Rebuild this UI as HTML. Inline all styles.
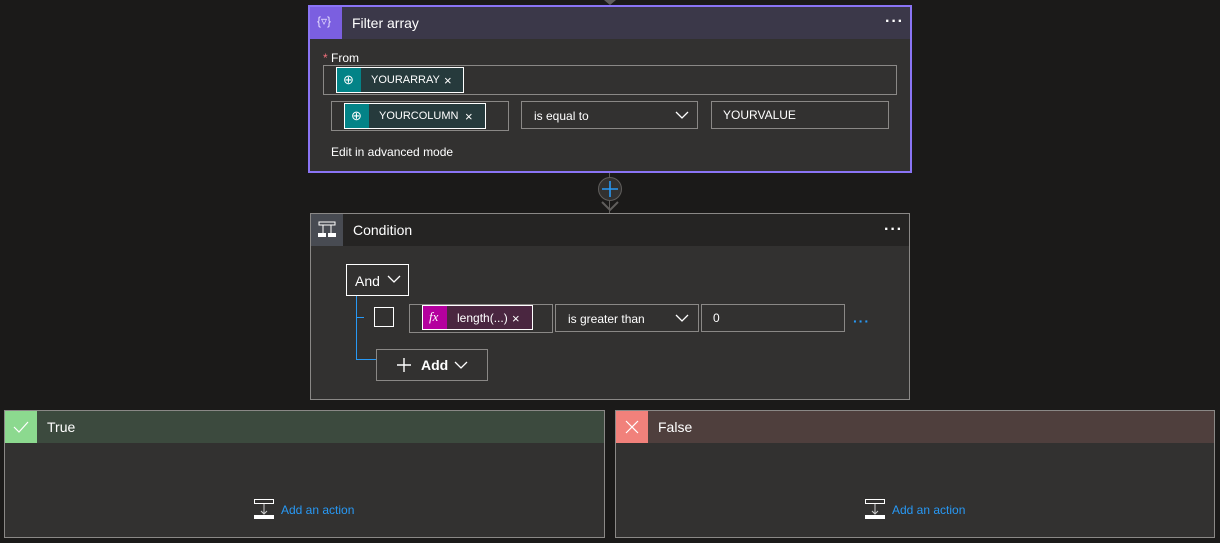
<!DOCTYPE html>
<html><head><meta charset="utf-8"><style>
*{box-sizing:border-box;margin:0;padding:0}
body{width:1220px;height:543px;background:#1b1a19;font-family:"Liberation Sans",sans-serif;color:#fff;position:relative;overflow:hidden;font-size:12px}
.a{position:absolute}
.box{position:absolute;border:1px solid #8a8886;background:#323130}
.dots{position:absolute;color:#fff;font-size:16px;letter-spacing:1px;font-weight:bold}
.tok{position:absolute;border:1px solid #fff;background:#263a3c;height:26px}
.tok .ic{position:absolute;left:0;top:0;bottom:0;width:24px;background:#038387}
.t{position:absolute;white-space:nowrap}
</style></head><body>
<div class="a" style="left:604px;top:0;width:0;height:0;border-left:6px solid transparent;border-right:6px solid transparent;border-top:5px solid #605e5c"></div>

<div class="a" style="left:308px;top:5px;width:604px;height:168px;border:2px solid #8a74f5;background:#323130"></div>
<div class="a" style="left:310px;top:7px;width:600px;height:32px;background:#3b3849"></div>
<div class="a" style="left:310px;top:7px;width:32px;height:32px;background:#7b5fe0"></div>
<div class="t" style="left:317px;top:14px;font-size:12px;color:#e8e0ff">{▿}</div>
<div class="t" style="left:352px;top:15px;font-size:14px">Filter array</div>
<div class="dots" style="left:885px;top:13px">···</div>
<div class="t" style="left:323px;top:51px;font-size:12px"><span style="color:#f1707b">*</span> From</div>
<div class="box" style="left:323px;top:65px;width:574px;height:30px"></div>
<div class="tok" style="left:336px;top:67px;width:128px"><div class="ic"></div><span class="t" style="left:6px;top:4px;font-size:13px">⊕</span><span class="t" style="left:34px;top:6px;font-size:11px">YOURARRAY</span><span class="t" style="left:107px;top:5px;font-size:13px">×</span></div>
<div class="box" style="left:331px;top:101px;width:178px;height:30px"></div>
<div class="tok" style="left:344px;top:103px;width:142px"><div class="ic"></div><span class="t" style="left:6px;top:4px;font-size:13px">⊕</span><span class="t" style="left:34px;top:6px;font-size:11px">YOURCOLUMN</span><span class="t" style="left:120px;top:5px;font-size:13px">×</span></div>
<div class="box" style="left:521px;top:101px;width:177px;height:28px"></div>
<div class="t" style="left:534px;top:109px">is equal to</div>
<svg class="a" style="left:675px;top:110px" width="14" height="10"><path d="M1 2 L7 8 L13 2" stroke="#fff" fill="none" stroke-width="1.3"/></svg>
<div class="box" style="left:711px;top:101px;width:178px;height:28px"></div>
<div class="t" style="left:723px;top:108px">YOURVALUE</div>
<div class="t" style="left:331px;top:145px">Edit in advanced mode</div>

<div class="a" style="left:609px;top:173px;width:1px;height:40px;background:#605e5c"></div>
<div class="a" style="left:598px;top:177px;width:24px;height:24px;border-radius:50%;border:1px solid #605e5c;background:#323130"></div>
<svg class="a" style="left:601px;top:180px" width="18" height="18"><path d="M9 1v16M1 9h16" stroke="#2899f5" stroke-width="1.6"/></svg>
<svg class="a" style="left:600px;top:200px" width="20" height="12"><path d="M2 2 L10 10 L18 2" stroke="#605e5c" fill="none" stroke-width="2"/></svg>

<div class="box" style="left:310px;top:213px;width:600px;height:187px"></div>
<div class="a" style="left:311px;top:214px;width:598px;height:32px;background:#252423"></div>
<div class="a" style="left:311px;top:214px;width:32px;height:32px;background:#484b52"></div>
<svg class="a" style="left:316px;top:220px" width="22" height="20"><path d="M3 2h16v3H3z M7 5v8 M15 5v8" stroke="#fff" fill="none"/><rect x="2" y="13" width="8" height="4" fill="#fff"/><rect x="12" y="13" width="8" height="4" fill="#fff"/></svg>
<div class="t" style="left:353px;top:222px;font-size:14px">Condition</div>
<div class="dots" style="left:884px;top:221px">···</div>
<div class="a" style="left:346px;top:264px;width:63px;height:32px;border:1px solid #fff;background:#323130"></div>
<div class="t" style="left:355px;top:273px;font-size:14px">And</div>
<svg class="a" style="left:387px;top:274px" width="14" height="10"><path d="M1 2 L7 8 L13 2" stroke="#fff" fill="none" stroke-width="1.3"/></svg>
<div class="a" style="left:356px;top:296px;width:1px;height:63px;background:#2899f5"></div>
<div class="a" style="left:356px;top:317px;width:8px;height:1px;background:#2899f5"></div>
<div class="a" style="left:356px;top:359px;width:20px;height:1px;background:#2899f5"></div>
<div class="a" style="left:374px;top:307px;width:20px;height:20px;border:1px solid #fff"></div>
<div class="box" style="left:409px;top:304px;width:144px;height:29px"></div>
<div class="a" style="left:422px;top:305px;width:111px;height:25px;border:1px solid #fff;background:#4a2640"></div>
<div class="a" style="left:423px;top:306px;width:24px;height:23px;background:#b4009e"></div>
<div class="t" style="left:429px;top:309px;font-family:'Liberation Serif',serif;font-style:italic;font-size:13px">fx</div>
<div class="t" style="left:457px;top:311px">length(...)</div>
<div class="t" style="left:512px;top:311px;font-size:13px">×</div>
<div class="box" style="left:555px;top:304px;width:144px;height:28px"></div>
<div class="t" style="left:568px;top:312px">is greater than</div>
<svg class="a" style="left:675px;top:313px" width="14" height="10"><path d="M1 2 L7 8 L13 2" stroke="#fff" fill="none" stroke-width="1.3"/></svg>
<div class="box" style="left:701px;top:304px;width:144px;height:28px"></div>
<div class="t" style="left:713px;top:311px">0</div>
<div class="dots" style="left:853px;top:313px;color:#2899f5;font-size:14px">···</div>
<div class="box" style="left:376px;top:349px;width:112px;height:32px"></div>
<svg class="a" style="left:396px;top:357px" width="16" height="16"><path d="M8 1v14M1 8h14" stroke="#fff" stroke-width="1.4"/></svg>
<div class="t" style="left:421px;top:357px;font-size:14px;font-weight:bold">Add</div>
<svg class="a" style="left:454px;top:360px" width="14" height="10"><path d="M1 2 L7 8 L13 2" stroke="#fff" fill="none" stroke-width="1.3"/></svg>

<div class="box" style="left:4px;top:410px;width:601px;height:128px"></div>
<div class="a" style="left:5px;top:411px;width:599px;height:32px;background:#3c4a3e"></div>
<div class="a" style="left:5px;top:411px;width:32px;height:32px;background:#8cd98f"></div>
<svg class="a" style="left:12px;top:419px" width="18" height="16"><path d="M2 8 L7 13 L16 3" stroke="#fff" fill="none" stroke-width="1.2"/></svg>
<div class="t" style="left:47px;top:419px;font-size:14px">True</div>
<svg class="a" style="left:253px;top:498px" width="22" height="22"><rect x="1.5" y="1.5" width="19" height="4" stroke="#fff" fill="none"/><path d="M11 6v10 M8 13l3 3 3-3" stroke="#ccc" fill="none"/><rect x="1" y="17" width="20" height="4" fill="#fff"/></svg>
<div class="t" style="left:281px;top:503px;color:#2899f5">Add an action</div>

<div class="box" style="left:615px;top:410px;width:600px;height:128px"></div>
<div class="a" style="left:616px;top:411px;width:598px;height:32px;background:#4f3f3d"></div>
<div class="a" style="left:616px;top:411px;width:32px;height:32px;background:#f1817b"></div>
<svg class="a" style="left:624px;top:419px" width="16" height="16"><path d="M2 2L14 14M14 2L2 14" stroke="#fff" stroke-width="1.2"/></svg>
<div class="t" style="left:658px;top:419px;font-size:14px">False</div>
<svg class="a" style="left:864px;top:498px" width="22" height="22"><rect x="1.5" y="1.5" width="19" height="4" stroke="#fff" fill="none"/><path d="M11 6v10 M8 13l3 3 3-3" stroke="#ccc" fill="none"/><rect x="1" y="17" width="20" height="4" fill="#fff"/></svg>
<div class="t" style="left:892px;top:503px;color:#2899f5">Add an action</div>
</body></html>
